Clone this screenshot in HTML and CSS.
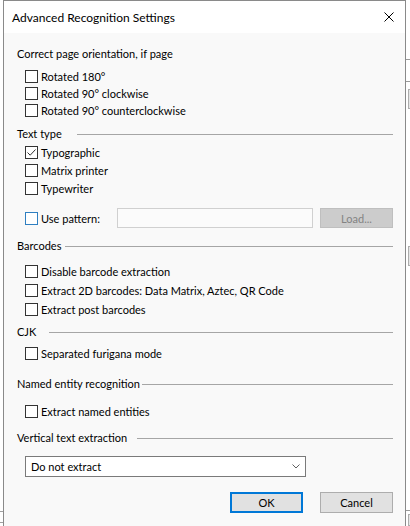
FILE: index.html
```html
<!DOCTYPE html>
<html>
<head>
<meta charset="utf-8">
<title>Advanced Recognition Settings</title>
<link rel="stylesheet" href="styles.css">
</head>
<body>
<div class="screen">
  <div class="left-strip">
    <div class="ls-line ls1"></div>
    <div class="ls-line ls2"></div>
  </div>
  <div class="dialog">
    <div class="titlebar">
      <span class="title">Advanced Recognition Settings</span>
      <svg class="close" width="10" height="10" viewBox="0 0 10 10"><path d="M0.5 0.5 L9.5 9.5 M9.5 0.5 L0.5 9.5" stroke="#000" stroke-width="1" fill="none"/></svg>
    </div>
    <div class="content">
      <div class="sec s-orient"><span class="lbl">Correct page orientation, if page</span></div>
      <div class="cbs h17 m5">
        <div class="cb"><span class="box"></span><span>Rotated 180°</span></div>
        <div class="cb"><span class="box"></span><span>Rotated 90° clockwise</span></div>
        <div class="cb"><span class="box"></span><span>Rotated 90° counterclockwise</span></div>
      </div>

      <div class="sec s-text"><span class="lbl">Text type</span><span class="rule"></span></div>
      <div class="cbs h18">
        <div class="cb"><span class="box"><svg width="11" height="11" viewBox="0 0 11 11"><path d="M1.5 5.5 L4.2 8.2 L9.5 2.5" fill="none" stroke="#333" stroke-width="1"/></svg></span><span>Typographic</span></div>
        <div class="cb"><span class="box"></span><span>Matrix printer</span></div>
        <div class="cb"><span class="box"></span><span>Typewriter</span></div>
      </div>

      <div class="pattern">
        <div class="cb pat-cb"><span class="box blue"></span><span>Use pattern:</span></div>
        <div class="input"></div>
        <div class="btn disabled">Load...</div>
      </div>

      <div class="sec s-bar"><span class="lbl">Barcodes</span><span class="rule"></span></div>
      <div class="cbs h19 m7">
        <div class="cb"><span class="box"></span><span>Disable barcode extraction</span></div>
        <div class="cb"><span class="box"></span><span>Extract 2D barcodes: Data Matrix, Aztec, QR Code</span></div>
        <div class="cb"><span class="box"></span><span>Extract post barcodes</span></div>
      </div>

      <div class="sec s-cjk"><span class="lbl">CJK</span><span class="rule"></span></div>
      <div class="cbs h19 m3">
        <div class="cb"><span class="box"></span><span>Separated furigana mode</span></div>
      </div>

      <div class="sec s-named"><span class="lbl">Named entity recognition</span><span class="rule"></span></div>
      <div class="cbs h19 m9">
        <div class="cb"><span class="box"></span><span>Extract named entities</span></div>
      </div>

      <div class="sec s-vert"><span class="lbl">Vertical text extraction</span><span class="rule"></span></div>
      <div class="select">
        <span>Do not extract</span>
        <svg width="8" height="5" viewBox="0 0 8 5"><path d="M0.5 0.5 L4 4 L7.5 0.5" fill="none" stroke="#606060" stroke-width="1"/></svg>
      </div>

      <div class="buttons">
        <div class="btn default">OK</div>
        <div class="btn">Cancel</div>
      </div>
    </div>
  </div>
  <div class="right-strip">
    <div class="rs-line rs1"></div>
    <div class="rs-line rs2"></div>
    <div class="rs-box rb1"></div>
    <div class="rs-box rb2"></div>
    <div class="rs-line rs3"></div>
    <div class="rs-box rb3"></div>
  </div>
</div>
</body>
</html>
```

FILE: styles.css
```css
* { box-sizing: border-box; }
html, body { margin: 0; padding: 0; }
body {
  background: #ffffff;
  font-family: Lato, "Liberation Sans", sans-serif;
  font-size: 11px;
  color: #000;
}
.screen {
  display: flex;
  width: 410px;
  height: 526px;
  overflow: hidden;
}

/* fragments of the window underneath */
.left-strip { width: 3px; flex: none; display: flex; flex-direction: column; }
.ls-line { height: 1px; background: #a0a0a0; }
.ls1 { margin-top: 511px; }
.ls2 { margin-top: 10px; }

.right-strip { width: 4px; flex: none; display: flex; flex-direction: column; }
.rs-line { height: 1px; background: #9a9a9a; }
.rs1 { margin-top: 59px; }
.rs2 { margin-top: 21px; }
.rs3 { margin-top: 244px; }
.rs-box { margin-left: 2px; border: 1px solid #adadad; border-right: none; background: #e6e6e6; }
.rb1 { margin-top: 7px; height: 21px; }
.rb2 { margin-top: 137px; height: 21px; }
.rb3 { margin-top: 3px; height: 12px; }

/* dialog */
.dialog {
  width: 403px;
  flex: none;
  border: 1px solid #8a8a8a;
  border-bottom: none;
  background: #f9f9f9;
  display: flex;
  flex-direction: column;
}
.titlebar {
  height: 32px;
  flex: none;
  background: #ffffff;
  display: flex;
  align-items: center;
  justify-content: space-between;
  padding: 0 11px 0 8px;
  font-size: 12px;
}
.title { white-space: nowrap; }
.close { display: block; }

.content {
  padding: 0 12px 0 13px;
  display: flex;
  flex-direction: column;
}

.sec {
  height: 20px;
  display: flex;
  align-items: center;
  white-space: nowrap;
}
.sec .lbl { flex: none; }
.sec .rule { flex: 1; height: 1px; background: #a6a6a6; margin-top: 2px; }
.s-orient { margin-top: 10px; }
.s-text { margin-top: 4px; }
.s-text .lbl { width: 60px; }
.s-bar { margin-top: 7px; }
.s-bar .lbl { width: 48px; }
.s-cjk { margin-top: 2px; }
.s-cjk .lbl { width: 32px; }
.s-named { margin-top: 10px; }
.s-named .lbl { width: 125px; }
.s-vert { margin-top: 6px; }
.s-vert .lbl { width: 120px; }

.cbs { padding-left: 8px; display: flex; flex-direction: column; }
.cbs.m3 { margin-top: 3px; }
.cbs.m5 { margin-top: 5px; }
.cbs.m7 { margin-top: 7px; }
.cbs.m9 { margin-top: 9px; }
.cb { display: flex; align-items: center; white-space: nowrap; }
.h17 .cb { height: 17px; }
.h18 .cb { height: 18px; }
.h19 .cb { height: 19px; }
.box {
  width: 13px;
  height: 13px;
  flex: none;
  border: 1px solid #333333;
  background: #ffffff;
  margin-right: 3px;
  display: flex;
}
.box svg { display: block; }
.box.blue { border-color: #2f7fc1; }

.pattern {
  margin-top: 11px;
  height: 20px;
  padding-left: 8px;
  display: flex;
  align-items: center;
}
.pat-cb { width: 92px; height: 20px; flex: none; }
.input {
  width: 196px;
  height: 20px;
  flex: none;
  border: 1px solid #d0d0d0;
  background: #fbfbfb;
}

.btn {
  width: 73px;
  height: 21px;
  flex: none;
  border: 1px solid #adadad;
  background: #e1e1e1;
  display: flex;
  align-items: center;
  justify-content: center;
}
.btn.disabled {
  height: 20px;
  margin-left: 7px;
  background: #cccccc;
  border-color: #bfbfbf;
  color: #838383;
}
.btn.default { border: 2px solid #0078d7; }

.select {
  margin-top: 9px;
  margin-left: 8px;
  width: 281px;
  height: 21px;
  border: 1px solid #7a7a7a;
  background: #ffffff;
  display: flex;
  align-items: center;
  justify-content: space-between;
  padding: 0 5px 0 5px;
}
.select svg { display: block; }

.buttons {
  margin-top: 15px;
  display: flex;
  justify-content: flex-end;
  gap: 17px;
}
```
